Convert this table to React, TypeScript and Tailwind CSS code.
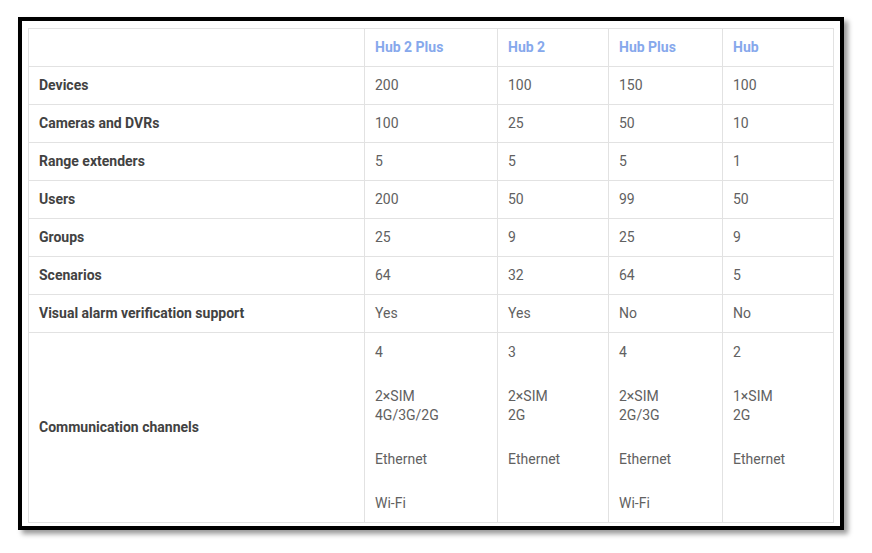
import React from 'react';

type Row = {
    label: string;
    values: string[];
};

const hubs = ['Hub 2 Plus', 'Hub 2', 'Hub Plus', 'Hub'];

const rows: Row[] = [
    { label: 'Devices', values: ['200', '100', '150', '100'] },
    { label: 'Cameras and DVRs', values: ['100', '25', '50', '10'] },
    { label: 'Range extenders', values: ['5', '5', '5', '1'] },
    { label: 'Users', values: ['200', '50', '99', '50'] },
    { label: 'Groups', values: ['25', '9', '25', '9'] },
    { label: 'Scenarios', values: ['64', '32', '64', '5'] },
    { label: 'Visual alarm verification support', values: ['Yes', 'Yes', 'No', 'No'] },
];

// each channel cell is a list of paragraphs, each paragraph a list of lines
const channels: string[][][] = [
    [['4'], ['2×SIM', '4G/3G/2G'], ['Ethernet'], ['Wi-Fi']],
    [['3'], ['2×SIM', '2G'], ['Ethernet']],
    [['4'], ['2×SIM', '2G/3G'], ['Ethernet'], ['Wi-Fi']],
    [['2'], ['1×SIM', '2G'], ['Ethernet']],
];

const colWidths = ['w-[336px]', 'w-[133px]', 'w-[111px]', 'w-[114px]', 'w-[111px]'];

const cell = 'border border-[#e2e2e2] px-[10px] text-left align-middle';

export default function App() {
    return (
        <div className="min-h-[553px] w-[872px] bg-white pl-[18px] pt-[17px]" style={{ fontFamily: 'Roboto, "Liberation Sans", sans-serif' }}>
            <div className="w-[826px] h-[513px] border-4 border-black bg-white pl-[6px] pt-[7px] shadow-[4px_4px_5px_rgba(0,0,0,0.4)]">
                <table className="table-fixed border-collapse w-[806px] text-[14px] leading-[19px]">
                    <colgroup>
                        {colWidths.map((w, i) => (
                            <col key={i} className={w} />
                        ))}
                    </colgroup>
                    <thead>
                        <tr className="h-[38px]">
                            <th className={cell} />
                            {hubs.map((h) => (
                                <th key={h} className={`${cell} font-bold text-[#86a8ec]`}>
                                    {h}
                                </th>
                            ))}
                        </tr>
                    </thead>
                    <tbody>
                        {rows.map((row) => (
                            <tr key={row.label} className="h-[38px]">
                                <td className={`${cell} font-bold text-[#424242]`}>{row.label}</td>
                                {row.values.map((v, i) => (
                                    <td key={i} className={`${cell} text-[#616161]`}>
                                        {v}
                                    </td>
                                ))}
                            </tr>
                        ))}
                        <tr>
                            <td className={`${cell} font-bold text-[#424242]`}>Communication channels</td>
                            {channels.map((paras, i) => (
                                <td key={i} className={`${cell} align-top pt-[10px] pb-[9px] text-[#616161]`}>
                                    {paras.map((lines, j) => (
                                        <p key={j} className={j > 0 ? 'mt-[25px]' : ''}>
                                            {lines.map((l, k) => (
                                                <span key={k} className="block">
                                                    {l}
                                                </span>
                                            ))}
                                        </p>
                                    ))}
                                </td>
                            ))}
                        </tr>
                    </tbody>
                </table>
            </div>
        </div>
    );
}
